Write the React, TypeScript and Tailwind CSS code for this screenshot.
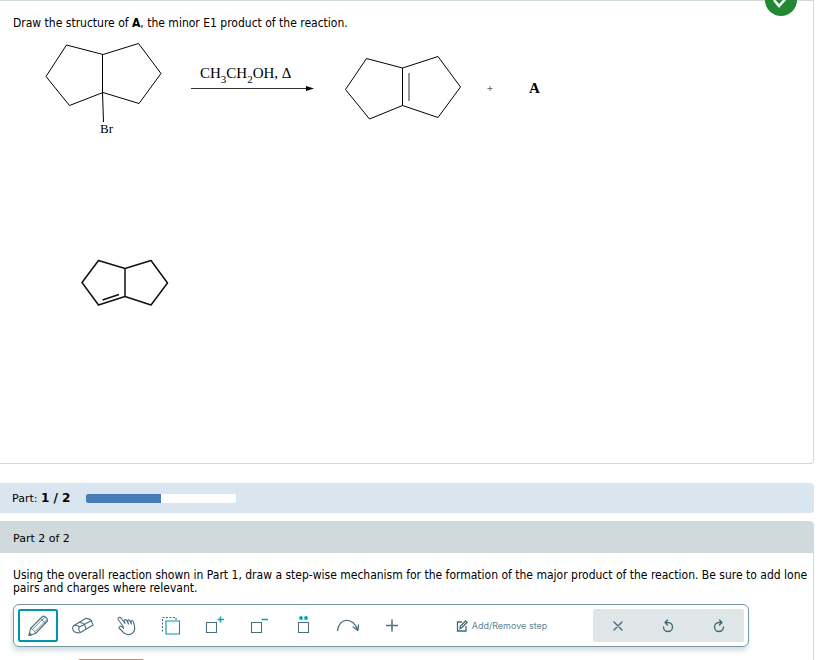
import type { ReactNode } from "react";

function ReactionScheme() {
  return (
    <svg width="560" height="104" viewBox="0 0 560 104" role="img" aria-label="Reaction scheme" fill="none" stroke="#000" strokeWidth="1" className="block font-['Liberation_Serif',serif]">
      <path d="M90 14.500L53.500 5L33 36.500L56.500 65.500L90 52.500L126 63.500L148 33.500L125.500 3.500L90 14.500" />
      <path d="M89.500 14.500V52.500L90.500 82" />
      <text x="87" y="93" fontSize="13" fill="#000" stroke="none">Br</text>
      <text x="187" y="38" fontSize="15" fill="#000" stroke="none">
        CH<tspan dy="5" fontSize="11">3</tspan>
        <tspan dy="-5">CH</tspan>
        <tspan dy="5" fontSize="11">2</tspan>
        <tspan dy="-5">OH, Δ</tspan>
      </text>
      <path d="M178 48.500H296" stroke="#333" />
      <path d="M293 46L301 48.500L293 51Z" fill="#000" stroke="none" />
      <path d="M389.500 28L353.500 18.500L332.500 49.500L356.500 79L389.500 65.500L425 77.500L447.500 47L425 16.500L389.500 28V65.500" />
      <path d="M396 33V61" stroke="#333" />
      <path d="M474.500 48.500H479.500M477 46V51" stroke="#777" />
      <text x="516" y="53" fontSize="15" fontWeight="700" fill="#000" stroke="none">A</text>
    </svg>
  );
}

function AnswerMolecule() {
  return (
    <svg width="90" height="48" viewBox="0 0 90 48" role="img" aria-label="Answer structure" fill="none" stroke="#111" strokeWidth="1.500" strokeLinejoin="round" className="block">
      <path d="M45 9.500L18.500 1.500L2 23.500L18.500 46L45 37.500L71 46L87.500 24L71 1.500L45 9.500V37.500" />
      <path d="M22.500 41L39 35.500" />
    </svg>
  );
}

function Tool({ label, active, children }: { label: string; active?: boolean; children: ReactNode }) {
  return (
    <button
      type="button"
      aria-label={label}
      aria-pressed={!!active}
      className={
        active
          ? "flex h-[33px] w-10 items-center justify-center rounded-xs border-2 border-[#0097ac] text-[#4a7080]"
          : "flex h-[33px] w-10 items-center justify-center text-[#4a7080]"
      }
    >
      <svg width="30" height="26" viewBox="0 0 30 26" fill="none" stroke="currentColor" strokeWidth="1.100" strokeLinejoin="round" strokeLinecap="round">
        {children}
      </svg>
    </button>
  );
}

function HistoryButton({ label, children }: { label: string; children: ReactNode }) {
  return (
    <button type="button" aria-label={label} className="flex h-full flex-1 items-center justify-center text-[#3c6878]">
      <svg width="16" height="16" viewBox="0 0 16 16" fill="none" stroke="currentColor" strokeWidth="1.300" strokeLinecap="round" strokeLinejoin="round">
        {children}
      </svg>
    </button>
  );
}

export default function App() {
  return (
    <main className="h-screen overflow-hidden bg-white pr-[5px] font-['DejaVu_Sans',Verdana,sans-serif] text-[11px] leading-[13px] text-black">
      <section className="relative h-[464px] rounded-br-sm border-t border-r border-b border-[#d0d9db] px-[13px] pt-4">
        <p className="font-['DejaVu_Sans_Condensed','DejaVu_Sans',sans-serif] text-xs leading-[13px]">
          Draw the structure of <b>A</b>, the minor E1 product of the reaction.
        </p>
        <div className="pt-[10px]">
          <ReactionScheme />
        </div>
        <div className="px-[67px] pt-[115px]">
          <AnswerMolecule />
        </div>
        <span className="absolute -top-[17px] right-4 flex h-8 w-8 items-center justify-center rounded-full bg-[#228833]">
          <svg width="20" height="20" viewBox="0 0 20 20" fill="none" stroke="#fff" strokeWidth="2.500" role="img" aria-label="Correct">
            <path d="M3 10L8 16L17 6" />
          </svg>
        </span>
      </section>

      <section className="mt-[19px] flex h-[30px] items-center gap-4 rounded-r-sm bg-[#dae6ef] pl-3">
        <span>
          Part: <b className="text-xs leading-[13px]">1 / 2</b>
        </span>
        <div role="progressbar" aria-valuemin={0} aria-valuemax={2} aria-valuenow={1} aria-label="Parts" className="h-[9px] w-[150px] overflow-hidden rounded-xs bg-white">
          <div className="h-full w-1/2 bg-[#457eb7]" />
        </div>
      </section>

      <section className="mt-2 h-40 rounded-tr-sm border-r border-[#d0d9db]">
        <h2 className="flex h-8 items-center rounded-tr-sm bg-[#d0d9db] pt-0.5 pl-[13px]">Part 2 of 2</h2>
        <p className="pt-4 pr-0.5 pl-[13px] font-['DejaVu_Sans_Condensed','DejaVu_Sans',sans-serif] text-xs leading-[13px]">
          Using the overall reaction shown in Part 1, draw a step-wise mechanism for the formation of the major product of the reaction. Be sure to add lone pairs and charges where relevant.
        </p>
        <div className="mt-[9px] mr-16 ml-[13px] flex h-[43px] items-center justify-between rounded-md border border-[#7698a2] px-1 shadow-[-1px_4px_5px_#d5dee2]">
          <div role="toolbar" aria-label="Drawing tools" className="flex gap-1">
            <Tool label="Pencil" active>
              <path d="M6 22.500L7.500 15.500L19.500 3.500Q21 2.500 23 4.500T24.500 8L12.500 20.500Z" />
              <path d="M7.500 15.500Q11.500 16 12.500 20.500M10 16L21.500 4.500M12.500 18L24 6.500M17.500 5.500L22.500 10.500" strokeWidth="0.800" />
              <path d="M6 22.500L6.500 20L8.500 21.800Z" fill="currentColor" />
            </Tool>
            <Tool label="Eraser">
              <path d="M7 12.500L18.500 5.500Q21 5 24 7L26 12L13.500 19.500Q10 20.500 7 18.500Q4 15 7 12.500Z" />
              <path d="M7 12.500Q10.500 12 12.500 14L24.500 7.500M12.500 14Q10.500 16 13.500 19.500M12.500 9.500Q16 9.500 17.500 11.500L19 16" />
            </Tool>
            <Tool label="Move">
              <path d="M12.500 14L7.500 7Q6.500 5 8 4.500T10.500 5.500L14 10.500L13 7.500Q14.500 5.500 16 8L17.500 11L16.500 7.500Q18 6 19 8L20.500 11L20 8Q21.500 7 22.500 9L23.500 13Q24.500 18 21 20.500T13 20L8 15Q8 13 9.500 13Q11 13.500 12.500 15.500" />
            </Tool>
            <Tool label="Select">
              <path d="M7.500 18.500V4.500H21V7" strokeDasharray="2 1.500" strokeLinecap="butt" />
              <path d="M11 8H24.500V21H11Z" stroke="#0097ac" strokeLinejoin="miter" />
            </Tool>
            <Tool label="Positive charge">
              <path d="M7.500 9.500H17.500V19.500H7.500Z" strokeLinejoin="miter" />
              <path d="M18.500 6.500H25M21.500 3.500V9.500" stroke="#00a9c2" strokeWidth="1.600" strokeLinecap="butt" />
            </Tool>
            <Tool label="Negative charge">
              <path d="M8.500 9.500H18.500V19.500H8.500Z" strokeLinejoin="miter" />
              <path d="M18.500 6.500H25" stroke="#00a9c2" strokeWidth="1.600" strokeLinecap="butt" />
            </Tool>
            <Tool label="Lone pair">
              <path d="M11.500 9.500H21.500V19.500H11.500Z" strokeLinejoin="miter" />
              <path d="M14 5H14.010M19 5H19.010" stroke="#00a9c2" strokeWidth="3.800" />
            </Tool>
            <Tool label="Curved arrow">
              <path d="M6.500 17.500C8 4 23 4 26.500 17M22 14L27 17.500L27.500 12" strokeWidth="1.300" />
            </Tool>
            <Tool label="Add">
              <path d="M11 12.500H23M17 6.500V18.500" strokeLinecap="butt" strokeWidth="1.500" />
            </Tool>
          </div>
          <button type="button" className="flex items-center gap-1 font-['Inter',sans-serif] text-[9px] text-[#5f8491]">
            <svg width="12" height="12" viewBox="0 0 12 12" fill="none" stroke="#3c6878" strokeWidth="1.300">
              <path d="M6 2H1.500V11H10V6M4 8.500L4.500 6L9.500 1L11 2.500L6 7.500Z" />
            </svg>
            Add/Remove step
          </button>
          <div className="flex h-[33px] w-[151px] rounded-xs bg-[#dfe6e7]">
            <HistoryButton label="Clear">
              <path d="M4 4L12 12M12 4L4 12" />
            </HistoryButton>
            <HistoryButton label="Undo">
              <path d="M3.500 9A4.500 4.500 0 1 0 8 4.500H5M7.500 2L5 4.500L7.500 7" />
            </HistoryButton>
            <HistoryButton label="Redo">
              <path d="M12.500 9A4.500 4.500 0 1 1 8 4.500H11M8.500 2L11 4.500L8.500 7" />
            </HistoryButton>
          </div>
        </div>
        <div className="mt-3 ml-[78px] h-4 w-[66px] rounded-xs bg-[#f57c20]" />
      </section>
    </main>
  );
}
